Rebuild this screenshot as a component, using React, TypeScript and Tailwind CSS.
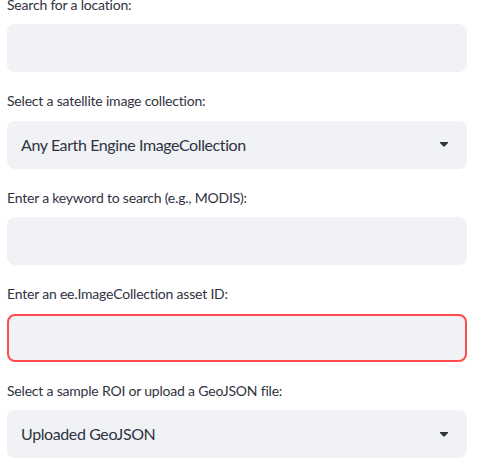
import React from 'react';

const font = { fontFamily: 'Lato, "Noto Sans", sans-serif' };

const Caret = () => (
  <svg width="8" height="5" viewBox="0 0 8 5" className="shrink-0">
    <path d="M0 0h8v1L4.6 4.6H3.4L0 1z" fill="#31333f" />
  </svg>
);

const Label: React.FC<{ text: string }> = ({ text }) => (
  <label className="flex items-center h-6 mb-2 text-[14px] tracking-[-0.2px] text-[#31333f]">{text}</label>
);

const TextField: React.FC<{ label: string; error?: boolean }> = ({ label, error }) => (
  <div>
    <Label text={label} />
    <div
      className={`h-12 rounded-lg bg-[#f0f2f6] ${
        error ? 'border-2 border-[#ff4b4b]' : 'border border-[#f0f2f6]'
      }`}
    />
  </div>
);

const SelectField: React.FC<{ label: string; value: string }> = ({ label, value }) => (
  <div>
    <Label text={label} />
    <div className="h-12 rounded-lg bg-[#f0f2f6] flex items-center justify-between pl-[14px] pr-[19px]">
      <span className="text-[16px] tracking-[-0.4px] text-[#31333f]">{value}</span>
      <Caret />
    </div>
  </div>
);

export default function App() {
  return (
    <div className="w-[485px] h-[474px] bg-white overflow-hidden" style={font}>
      <div className="w-[460px] ml-[7px] -mt-2 flex flex-col gap-[16.5px]">
        <TextField label="Search for a location:" />
        <SelectField label="Select a satellite image collection:" value="Any Earth Engine ImageCollection" />
        <TextField label="Enter a keyword to search (e.g., MODIS):" />
        <TextField label="Enter an ee.ImageCollection asset ID:" error />
        <SelectField label="Select a sample ROI or upload a GeoJSON file:" value="Uploaded GeoJSON" />
      </div>
    </div>
  );
}
